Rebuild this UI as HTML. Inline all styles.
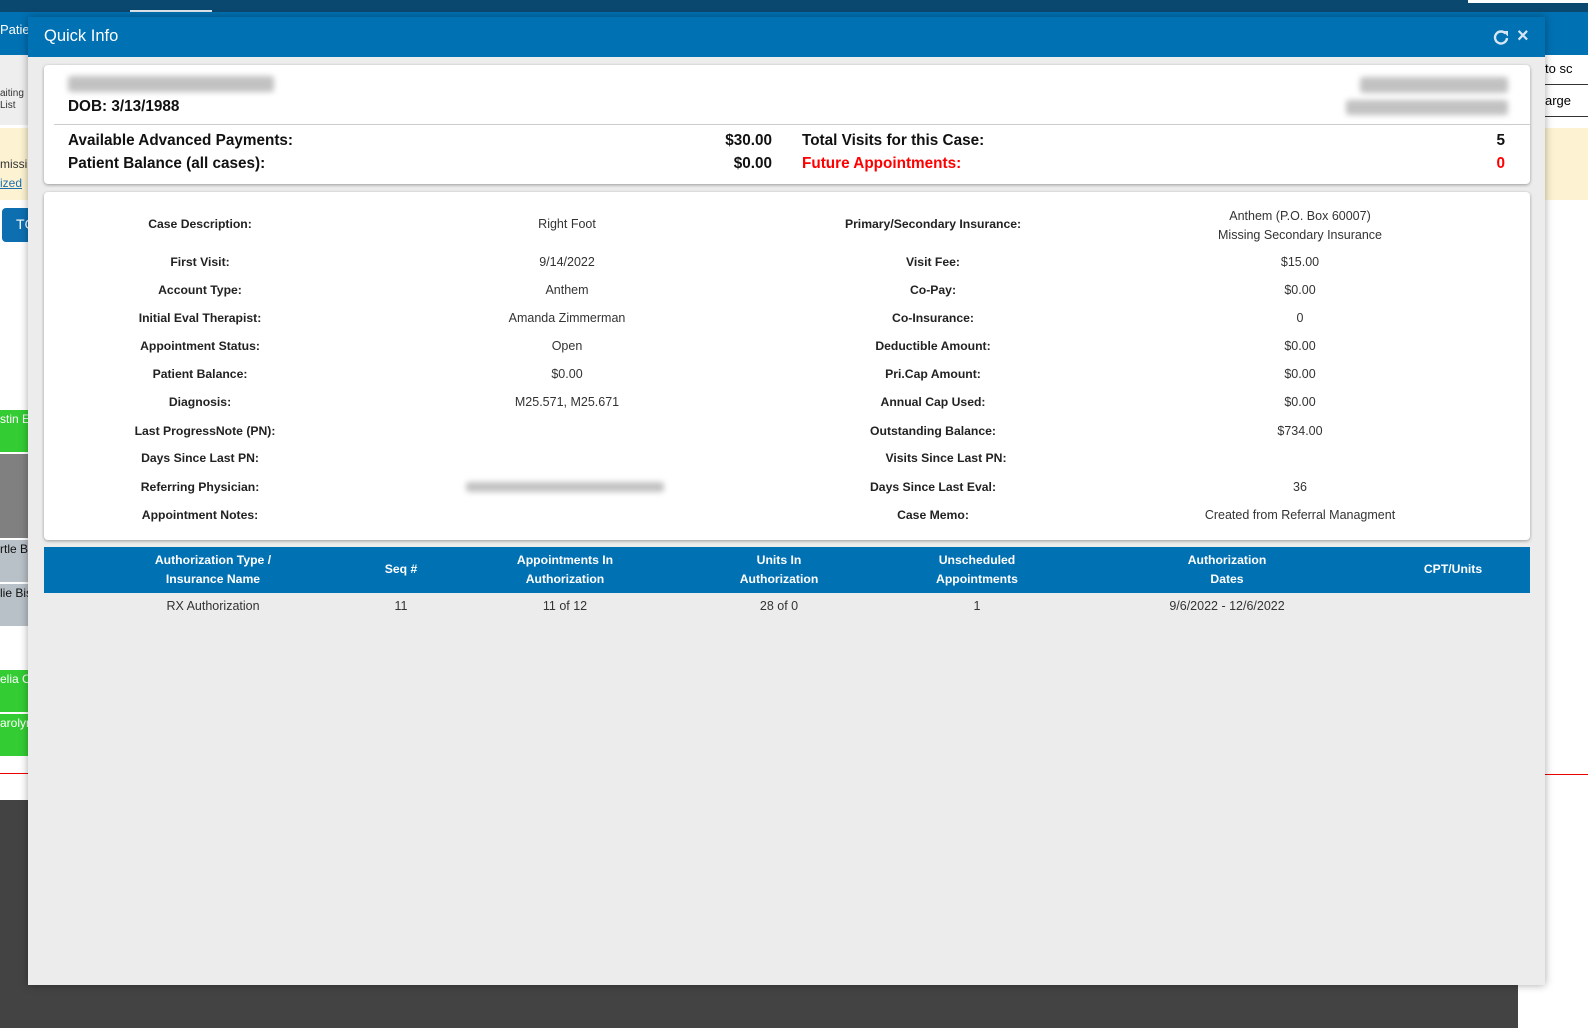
<!DOCTYPE html>
<html><head><meta charset="utf-8"><style>
*{margin:0;padding:0;box-sizing:border-box}
body{width:1588px;height:1028px;overflow:hidden;background:#fff;font-family:"Liberation Sans",Arial,sans-serif;position:relative}
.a{position:absolute}
.s{white-space:nowrap;overflow:hidden}
.c{position:absolute;transform:translateX(-50%);white-space:nowrap;text-align:center}
.lb{font-size:12.2px;font-weight:bold;color:#222}
.vl{font-size:12.5px;color:#333}
.th{font-size:12.2px;font-weight:bold;color:#fff;line-height:19px}
.blur{filter:blur(3px);background:#999;opacity:.6;position:absolute;border-radius:3px}
.big{font-size:15.3px;font-weight:bold;color:#111}
</style></head><body>
<div class="a" style="left:0;top:0;width:1588px;height:12px;background:#0b4870"></div>
<div class="a" style="left:130px;top:10px;width:82px;height:7px;background:#dfe4ea"></div>
<div class="a" style="left:1468px;top:0;width:120px;height:3px;background:#fff"></div>
<div class="a" style="left:0;top:12px;width:1588px;height:43px;background:#0071b3"></div>
<div class="a s" style="left:0;top:22px;width:28px;color:#fff;font-size:13px">Patien</div>
<div class="a" style="left:0;top:55px;width:28px;height:70px;background:#eee"></div>
<div class="a s" style="left:0;top:88px;width:28px;font-size:10px;color:#333;line-height:12px">aiting<br>List</div>
<div class="a" style="left:0;top:128px;width:28px;height:72px;background:#fdf3d3"></div>
<div class="a s" style="left:0;top:155px;width:28px;font-size:12px;color:#333;line-height:19px">missi<br><span style="color:#1a6fb0;text-decoration:underline">ized</span></div>
<div class="a s" style="left:2px;top:208px;width:26px;height:34px;background:#0d6fb0;border-radius:4px 0 0 4px;color:#fff;font-size:14px;padding:8px 0 0 14px">TC</div>
<div class="a s" style="left:0;top:410px;width:28px;height:42px;background:#33cc33;color:#fff;font-size:12px;padding-top:2px">stin E</div>
<div class="a" style="left:0;top:454px;width:28px;height:84px;background:#808080"></div>
<div class="a s" style="left:0;top:540px;width:28px;height:42px;background:#b8c0c8;font-size:12px;padding-top:2px;color:#111">rtle Br</div>
<div class="a s" style="left:0;top:584px;width:28px;height:42px;background:#b8c0c8;font-size:12px;padding-top:2px;color:#111">lie Bis</div>
<div class="a s" style="left:0;top:670px;width:28px;height:42px;background:#33cc33;color:#fff;font-size:12px;padding-top:2px">elia C</div>
<div class="a s" style="left:0;top:714px;width:28px;height:42px;background:#33cc33;color:#fff;font-size:12px;padding-top:2px">arolyn</div>
<div class="a" style="left:0;top:773px;width:28px;height:1px;background:#e00"></div>
<div class="a" style="left:0;top:800px;width:1518px;height:228px;background:#434343"></div>
<div class="a s" style="left:1545px;top:55px;width:43px;height:30px;border-bottom:1px solid #333;font-size:13px;padding-top:6px">to sc</div>
<div class="a s" style="left:1545px;top:87px;width:43px;height:30px;border-bottom:1px solid #333;font-size:13px;padding-top:6px">arge</div>
<div class="a" style="left:1545px;top:128px;width:43px;height:72px;background:#fdf3d3"></div>
<div class="a" style="left:1545px;top:774px;width:43px;height:1px;background:#e00"></div>
<div class="a" style="left:28px;top:17px;width:1517px;height:968px;background:#ececec;box-shadow:0 0 8px rgba(0,0,0,.35)">
 <div class="a" style="left:0;top:0;width:1517px;height:40px;background:#0071b3"></div>
 <div class="a" style="left:16px;top:10px;color:#fff;font-size:16.5px">Quick Info</div>
 <svg class="a" style="left:1464px;top:11px" width="18" height="18" viewBox="0 0 18 18"><path d="M13.5 5.5A6 6 0 1 0 15 10" fill="none" stroke="#d6e6f3" stroke-width="2.4"/><path d="M10.5 3h5.5v5.5z" fill="#d6e6f3"/></svg>
 <div class="a" style="left:1489px;top:8px;color:#d6e6f3;font-size:20px;font-weight:bold">×</div>
</div>
<div class="a" style="left:44px;top:65px;width:1486px;height:119px;background:#fff;border-radius:4px;box-shadow:0 1px 3px rgba(0,0,0,.35)">
 <div class="blur" style="left:24px;top:11px;width:206px;height:16px"></div>
 <div class="a big" style="left:24px;top:33px">DOB: 3/13/1988</div>
 <div class="blur" style="left:1316px;top:12px;width:148px;height:16px"></div>
 <div class="blur" style="left:1302px;top:35px;width:162px;height:15px"></div>
 <div class="a" style="left:10px;top:59px;width:1476px;height:1px;background:#ccc"></div>
 <div class="a big" style="left:24px;top:67px">Available Advanced Payments:</div>
 <div class="a big" style="left:24px;top:90px">Patient Balance (all cases):</div>
 <div class="a big" style="right:758px;top:67px">$30.00</div>
 <div class="a big" style="right:758px;top:90px">$0.00</div>
 <div class="a big" style="left:758px;top:67px">Total Visits for this Case:</div>
 <div class="a big" style="left:758px;top:90px;color:#f00">Future Appointments:</div>
 <div class="a big" style="right:25px;top:67px">5</div>
 <div class="a big" style="right:25px;top:90px;color:#f00">0</div>
</div>
<div class="a" style="left:44px;top:192px;width:1486px;height:348px;background:#fff;border-radius:4px;box-shadow:0 1px 3px rgba(0,0,0,.35)"></div>
<div class="c lb" style="left:200px;top:217px">Case Description:</div>
<div class="c vl" style="left:567px;top:217px">Right Foot</div>
<div class="c lb" style="left:933px;top:217px">Primary/Secondary Insurance:</div>
<div class="c vl" style="left:1300px;top:207px;line-height:19px">Anthem (P.O. Box 60007)<br>Missing Secondary Insurance</div>
<div class="c lb" style="left:200px;top:255px">First Visit:</div><div class="c vl" style="left:567px;top:255px">9/14/2022</div><div class="c lb" style="left:933px;top:255px">Visit Fee:</div><div class="c vl" style="left:1300px;top:255px">$15.00</div>
<div class="c lb" style="left:200px;top:283px">Account Type:</div><div class="c vl" style="left:567px;top:283px">Anthem</div><div class="c lb" style="left:933px;top:283px">Co-Pay:</div><div class="c vl" style="left:1300px;top:283px">$0.00</div>
<div class="c lb" style="left:200px;top:311px">Initial Eval Therapist:</div><div class="c vl" style="left:567px;top:311px">Amanda Zimmerman</div><div class="c lb" style="left:933px;top:311px">Co-Insurance:</div><div class="c vl" style="left:1300px;top:311px">0</div>
<div class="c lb" style="left:200px;top:339px">Appointment Status:</div><div class="c vl" style="left:567px;top:339px">Open</div><div class="c lb" style="left:933px;top:339px">Deductible Amount:</div><div class="c vl" style="left:1300px;top:339px">$0.00</div>
<div class="c lb" style="left:200px;top:367px">Patient Balance:</div><div class="c vl" style="left:567px;top:367px">$0.00</div><div class="c lb" style="left:933px;top:367px">Pri.Cap Amount:</div><div class="c vl" style="left:1300px;top:367px">$0.00</div>
<div class="c lb" style="left:200px;top:395px">Diagnosis:</div><div class="c vl" style="left:567px;top:395px">M25.571, M25.671</div><div class="c lb" style="left:933px;top:395px">Annual Cap Used:</div><div class="c vl" style="left:1300px;top:395px">$0.00</div>
<div class="c lb" style="left:205px;top:424px">Last ProgressNote (PN):</div><div class="c lb" style="left:933px;top:424px">Outstanding Balance:</div><div class="c vl" style="left:1300px;top:424px">$734.00</div>
<div class="c lb" style="left:200px;top:451px">Days Since Last PN:</div><div class="c lb" style="left:946px;top:451px">Visits Since Last PN:</div>
<div class="c lb" style="left:200px;top:480px">Referring Physician:</div><div class="blur" style="left:466px;top:482px;width:198px;height:10px"></div><div class="c lb" style="left:933px;top:480px">Days Since Last Eval:</div><div class="c vl" style="left:1300px;top:480px">36</div>
<div class="c lb" style="left:200px;top:508px">Appointment Notes:</div><div class="c lb" style="left:933px;top:508px">Case Memo:</div><div class="c vl" style="left:1300px;top:508px">Created from Referral Managment</div>
<div class="a" style="left:44px;top:547px;width:1486px;height:46px;background:#0071b3"></div>
<div class="c th" style="left:213px;top:551px">Authorization Type /<br>Insurance Name</div>
<div class="c th" style="left:401px;top:560px">Seq #</div>
<div class="c th" style="left:565px;top:551px">Appointments In<br>Authorization</div>
<div class="c th" style="left:779px;top:551px">Units In<br>Authorization</div>
<div class="c th" style="left:977px;top:551px">Unscheduled<br>Appointments</div>
<div class="c th" style="left:1227px;top:551px">Authorization<br>Dates</div>
<div class="c th" style="left:1453px;top:560px">CPT/Units</div>
<div class="c vl" style="left:213px;top:599px">RX Authorization</div>
<div class="c vl" style="left:401px;top:599px">11</div>
<div class="c vl" style="left:565px;top:599px">11 of 12</div>
<div class="c vl" style="left:779px;top:599px">28 of 0</div>
<div class="c vl" style="left:977px;top:599px">1</div>
<div class="c vl" style="left:1227px;top:599px">9/6/2022 - 12/6/2022</div>
</body></html>
